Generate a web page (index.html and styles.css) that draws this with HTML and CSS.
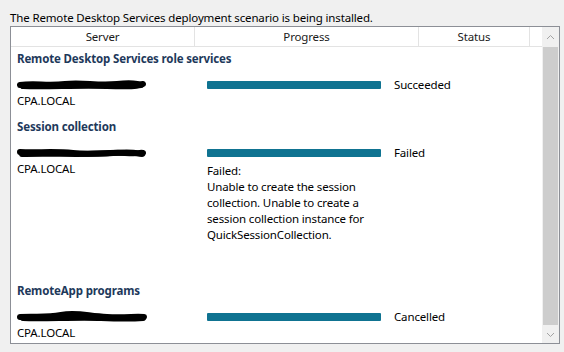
FILE: index.html
```html
<!DOCTYPE html>
<html lang="en">
<head>
    <meta charset="UTF-8">
    <title>Deployment Progress</title>
    <link rel="stylesheet" href="styles.css">
</head>
<body>
    <div class="title">The Remote Desktop Services deployment scenario is being installed.</div>

    <div class="listbox">
        <div class="main">
            <div class="header">
                <div class="col col-server">Server</div>
                <div class="col col-progress">Progress</div>
                <div class="col col-status">Status</div>
                <div class="col col-filler"></div>
            </div>

            <div class="rows">
                <section class="group">
                    <h2>Remote Desktop Services role services</h2>
                    <div class="entry">
                        <div class="server-name">
                            <div class="line"><svg class="redact" width="132" height="12" viewBox="0 0 132 12"><path d="M3 6 C 18 4, 30 7, 48 5 S 80 7, 100 5 S 120 6, 126 5" /><path d="M6 7 C 30 8, 60 6, 90 7 S 115 7, 124 6" /></svg></div>
                            <div class="line">CPA.LOCAL</div>
                        </div>
                        <div class="progress-cell">
                            <div class="line"><div class="bar"></div></div>
                        </div>
                        <div class="state">Succeeded</div>
                    </div>
                </section>

                <section class="group">
                    <h2>Session collection</h2>
                    <div class="entry">
                        <div class="server-name">
                            <div class="line"><svg class="redact" width="132" height="12" viewBox="0 0 132 12"><path d="M3 5 C 20 6, 36 4, 56 6 S 90 5, 108 6 S 122 5, 126 6" /><path d="M5 7 C 30 6, 70 8, 96 6 S 118 7, 125 7" /></svg></div>
                            <div class="line">CPA.LOCAL</div>
                        </div>
                        <div class="progress-cell">
                            <div class="line"><div class="bar"></div></div>
                            <div class="message">Failed:<br>Unable to create the session<br>collection. Unable to create a<br>session collection instance for<br>QuickSessionCollection.</div>
                        </div>
                        <div class="state">Failed</div>
                    </div>
                </section>

                <section class="group">
                    <h2>RemoteApp programs</h2>
                    <div class="entry">
                        <div class="server-name">
                            <div class="line"><svg class="redact" width="132" height="12" viewBox="0 0 132 12"><path d="M3 6 C 16 5, 28 7, 44 4 S 70 5, 90 6 S 118 5, 127 6" /><path d="M6 7 C 26 8, 58 6, 84 7 S 112 8, 126 7" /></svg></div>
                            <div class="line">CPA.LOCAL</div>
                        </div>
                        <div class="progress-cell">
                            <div class="line"><div class="bar"></div></div>
                        </div>
                        <div class="state">Cancelled</div>
                    </div>
                </section>
            </div>
        </div>

        <div class="scrollbar">
            <div class="arrow">
                <svg width="9" height="6" viewBox="0 0 9 6"><path d="M1 5 L4.5 1.5 L8 5" /></svg>
            </div>
            <div class="thumb"></div>
            <div class="arrow">
                <svg width="9" height="6" viewBox="0 0 9 6"><path d="M1 1 L4.5 4.5 L8 1" /></svg>
            </div>
        </div>
    </div>
</body>
</html>
```

FILE: styles.css
```css
body {
    margin: 0;
    background-color: #f0f0f0;
    color: #000;
    font-family: "Segoe UI", "Noto Sans", sans-serif;
    font-size: 11.5px;
    letter-spacing: -0.15px;
    line-height: 16px;
}
.title {
    padding: 10px 0 0 10px;
    height: 16px;
}
.listbox {
    display: flex;
    margin-left: 10px;
    width: 548px;
    height: 316px;
    border: 1px solid #8c8f96;
    background-color: #fff;
    overflow: hidden;
}
.main {
    flex: 1;
    display: flex;
    flex-direction: column;
    overflow: hidden;
}
.header {
    display: flex;
    height: 19px;
    border-bottom: 1px solid #e3e3e3;
    color: #1a1a1a;
}
.col {
    text-align: center;
    line-height: 19px;
    border-right: 1px solid #e3e3e3;
}
.col-server { width: 183px; }
.col-progress { width: 223px; }
.col-status { width: 110px; }
.col-filler { flex: 1; border-right: none; }
.rows {
    padding: 4px 0 0 6px;
}
.group h2 {
    margin: 0;
    font-size: 11.5px;
    font-weight: bold;
    color: #1e395b;
}
.group + .group {
    margin-top: 10px;
}
.entry {
    display: grid;
    grid-template-columns: 190px 187px auto;
    margin-top: 10px;
}
.line {
    height: 16px;
    display: flex;
    align-items: center;
}
.redact path {
    fill: none;
    stroke: #000;
    stroke-width: 6;
    stroke-linecap: round;
}
.bar {
    width: 174px;
    height: 8px;
    background-color: #0f7391;
    border-radius: 1px;
}
.message {
    margin: 2px 0 30px;
}
.scrollbar {
    width: 17px;
    display: flex;
    flex-direction: column;
    background-color: #f0f0f0;
}
.arrow {
    height: 19px;
    display: flex;
    align-items: center;
    justify-content: center;
}
.arrow:last-child {
    height: 17px;
}
.arrow path {
    fill: none;
    stroke: #a3a3a3;
    stroke-width: 1;
}
.thumb {
    flex: 1;
    margin: 1px 1px;
    background-color: #cdcdcd;
}
```
